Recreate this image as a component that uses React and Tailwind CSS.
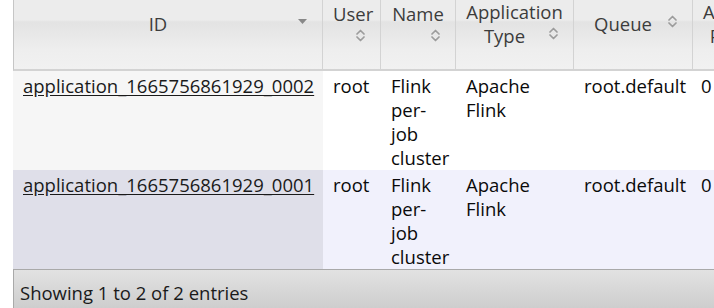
import React from 'react'

function SortBoth() {
  return (
    <svg width="9" height="13" viewBox="0 0 9 13" fill="none" stroke="#9c9c9c" strokeWidth="1.7" strokeLinecap="round" strokeLinejoin="round">
      <path d="M1 5 4.5 1.5 8 5" />
      <path d="M1 8 4.5 11.5 8 8" />
    </svg>
  )
}

function SortDesc() {
  return (
    <svg width="9" height="5" viewBox="0 0 9 5">
      <path d="M0 0h9L4.5 5z" fill="#888888" />
    </svg>
  )
}

function Head({ children, icon, first }) {
  return (
    <div
      className={`flex h-[71px] flex-col justify-center border-r border-b-2 border-[#d3d3d3] bg-[linear-gradient(to_bottom,#ececec_0,#ececec_20px,#e3e3e3_22px,#eeeeee_50px,#f1f1f1_100%)] px-[10px] pb-[22px] text-center text-[#3c3c3c] ${first ? 'border-l border-l-[#c6c6c6]' : ''}`}
    >
      <div>
        {children}
        <span className="float-right ml-[6px] flex h-[20px] w-[14px] items-center">{icon}</span>
      </div>
    </div>
  )
}

const apps = [
  { id: 'application_1665756861929_0002', user: 'root', name: 'Flink per-job cluster', type: 'Apache Flink', queue: 'root.default', priority: '0' },
  { id: 'application_1665756861929_0001', user: 'root', name: 'Flink per-job cluster', type: 'Apache Flink', queue: 'root.default', priority: '0' },
]

export default function App() {
  return (
    <div className="h-[308px] w-[714px] overflow-hidden bg-white font-['Open_Sans','Noto_Sans',sans-serif] text-[18.5px] leading-6 text-[#0a0a0a]">
      <div className="ml-[13px] grid w-[797px] grid-cols-[310px_58px_75px_118px_119px_117px]">
        <Head first icon={<SortDesc />}>ID</Head>
        <Head icon={<SortBoth />}>User</Head>
        <Head icon={<SortBoth />}>Name</Head>
        <Head icon={<SortBoth />}>Application Type</Head>
        <Head icon={<SortBoth />}>Queue</Head>
        <Head icon={<SortBoth />}>Application Priority</Head>

        {apps.map((a, i) => {
          const sorted = i % 2 === 0 ? 'bg-[#f6f6f6]' : 'bg-[#dfdfe9]'
          const row = i % 2 === 0 ? 'bg-white' : 'bg-[#f1f1fc]'
          return (
            <React.Fragment key={a.id}>
              <div className={`${sorted} whitespace-nowrap px-[10px] pt-[3px]`}>
                <a href="#" className="text-[#1a1a1a] underline underline-offset-2">{a.id}</a>
              </div>
              <div className={`${row} px-[10px] pt-[3px]`}>{a.user}</div>
              <div className={`${row} px-[10px] pt-[3px]`}>{a.name}</div>
              <div className={`${row} px-[10px] pt-[3px]`}>{a.type}</div>
              <div className={`${row} whitespace-nowrap px-[10px] pt-[3px]`}>{a.queue}</div>
              <div className={`${row} px-[8px] pt-[3px]`}>{a.priority}</div>
            </React.Fragment>
          )
        })}
      </div>

      <div className="ml-[13px] border-l border-t border-[#a9a9a9] bg-[linear-gradient(to_bottom,#e2e2e2,#c9c9c9)] pl-[6px] pt-[11px] pb-[11px] text-[#1a1a1a]">
        Showing 1 to 2 of 2 entries
      </div>
    </div>
  )
}
